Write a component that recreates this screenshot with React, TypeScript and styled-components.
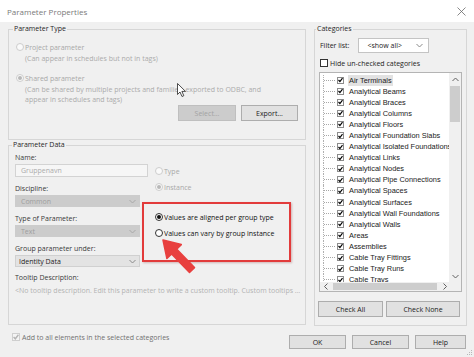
import React from 'react';
import styled, { createGlobalStyle } from 'styled-components';

const GlobalStyle = createGlobalStyle`
  html, body { margin: 0; padding: 0; background: #f0f0f0; }
  body { font-family: "Open Sans", "Noto Sans", "Liberation Sans", sans-serif; }
  * { box-sizing: border-box; }
`;

const Window = styled.div`
  position: relative;
  width: 474px;
  height: 357px;
  overflow: hidden;
  background: #f0f0f0;
  display: flex;
  flex-direction: column;
  font-size: 7px;
  color: #1f1f1f;
`;

const TitleBar = styled.div`
  flex: none;
  height: 22px;
  background: #ffffff;
  display: flex;
  align-items: center;
  justify-content: space-between;
  padding: 0 8px 0 7px;
  font-size: 8px;
  color: #7a7a7a;
`;

const Body = styled.div`
  display: grid;
  grid-template-columns: 298px 153px;
  column-gap: 8px;
  padding: 2px 0 0 8px;
`;

const Column = styled.div`
  display: flex;
  flex-direction: column;
`;

const Group = styled.fieldset<{ $h: number; $pad: string }>`
  margin: 0;
  min-width: 0;
  height: ${p => p.$h}px;
  border: 1px solid #d6d6d6;
  padding: ${p => p.$pad};
  display: flex;
  flex-direction: column;
`;

const Legend = styled.legend`
  padding: 0 1px;
  margin-left: -3px;
  line-height: 10px;
  color: #262626;
`;

// radio buttons
const RadioRow = styled.div<{ $enabled?: boolean; $mt?: number }>`
  height: 12px;
  display: flex;
  align-items: center;
  gap: 1px;
  margin-top: ${p => p.$mt ?? 0}px;
  color: ${p => (p.$enabled ? '#111111' : '#a8a8a8')};
`;

const Radio = styled.span<{ $checked?: boolean; $enabled?: boolean }>`
  flex: none;
  width: 8px;
  height: 8px;
  border-radius: 50%;
  border: 1px solid ${p => (p.$enabled ? '#333333' : '#cdcdcd')};
  background: ${p => (p.$enabled ? '#ffffff' : '#fafafa')};
  display: flex;
  align-items: center;
  justify-content: center;

  &::after {
    content: '';
    width: 4px;
    height: 4px;
    border-radius: 50%;
    background: ${p => (p.$enabled ? '#111111' : '#b8b8b8')};
    display: ${p => (p.$checked ? 'block' : 'none')};
  }
`;

const OptionBlock = styled.div<{ $mt: number }>`
  display: flex;
  flex-direction: column;
  gap: 1px;
  margin-top: ${p => p.$mt}px;
`;

const Hint = styled.div`
  padding-left: 9px;
  line-height: 10px;
  color: #ababab;
`;

const ButtonRow = styled.div<{ $justify: string; $gap: number; $ml?: number }>`
  display: flex;
  justify-content: ${p => p.$justify};
  gap: ${p => p.$gap}px;
  margin: auto 0 0 ${p => p.$ml ?? 0}px;
`;

const Button = styled.div<{ $w: number; $h?: number; $disabled?: boolean }>`
  width: ${p => p.$w}px;
  height: ${p => p.$h ?? 16}px;
  display: flex;
  align-items: center;
  justify-content: center;
  background: ${p => (p.$disabled ? '#cccccc' : '#e1e1e1')};
  border: 1px solid ${p => (p.$disabled ? '#bfbfbf' : '#adadad')};
  color: ${p => (p.$disabled ? '#a3a3a3' : '#222222')};
`;

// parameter data
const DataGrid = styled.div`
  display: grid;
  grid-template-columns: 127px 150px;
`;

const Fields = styled.div`
  display: flex;
  flex-direction: column;
  gap: 6px;
`;

const Field = styled.div`
  display: flex;
  flex-direction: column;
  gap: 1px;
`;

const FieldLabel = styled.div`
  line-height: 11px;
  color: #3a3a3a;
`;

const TextInput = styled.div`
  width: 133px;
  height: 13px;
  display: flex;
  align-items: center;
  padding-left: 5px;
  background: #f6f6f6;
  border: 1px solid #d3d3d3;
  color: #ababab;
`;

const Select = styled.div<{ $variant: 'disabled' | 'normal' | 'white'; $w: number; $h: number; $pl: number }>`
  width: ${p => p.$w}px;
  height: ${p => p.$h}px;
  display: flex;
  align-items: center;
  justify-content: space-between;
  padding: 0 ${p => (p.$variant === 'white' ? 5 : 3)}px 0 ${p => p.$pl}px;
  background: ${p => (p.$variant === 'disabled' ? '#cccccc' : p.$variant === 'normal' ? '#e3e3e3' : '#ffffff')};
  border: 1px solid ${p => (p.$variant === 'disabled' ? '#cccccc' : p.$variant === 'normal' ? '#d0d0d0' : '#c4c4c4')};
  color: ${p => (p.$variant === 'disabled' ? '#9e9e9e' : '#222222')};
`;

const Scope = styled.div`
  display: flex;
  flex-direction: column;
  padding: 13px 0 0 13px;
`;

const Highlight = styled.div`
  width: 149px;
  height: 60px;
  margin: 9px 0 0 -13px;
  padding: 7px 0 0 11px;
  border: 2px solid #e23b3b;
  box-shadow: 1px 1px 2px rgba(120, 0, 0, 0.25);
  display: flex;
  flex-direction: column;
  gap: 4px;
`;

const Tooltip = styled.div`
  display: flex;
  flex-direction: column;
  gap: 3px;
  margin-top: 5px;
`;

const TooltipText = styled.div`
  width: 286px;
  line-height: 10px;
  color: #b3b3b3;
  white-space: nowrap;
  overflow: hidden;
  text-overflow: ellipsis;
`;

// categories
const FilterRow = styled.div`
  height: 15px;
  display: flex;
  align-items: center;
  gap: 9px;
  padding-left: 1px;
  color: #222222;
`;

const CheckRow = styled.div<{ $mt: number; $pl?: number; $disabled?: boolean }>`
  height: 10px;
  display: flex;
  align-items: center;
  gap: 2px;
  margin-top: ${p => p.$mt}px;
  padding-left: ${p => p.$pl ?? 0}px;
  color: ${p => (p.$disabled ? '#707070' : '#222222')};
`;

const Box = styled.span<{ $tone?: 'plain' | 'disabled' | 'list' }>`
  flex: none;
  width: ${p => (p.$tone === 'list' ? 7 : 8)}px;
  height: ${p => (p.$tone === 'list' ? 7 : 8)}px;
  margin-left: ${p => (p.$tone === 'list' ? 2 : 0)}px;
  background: ${p => (p.$tone === 'disabled' ? '#f4f4f4' : '#ffffff')};
  border: 1px solid ${p => (p.$tone === 'disabled' ? '#cfcfcf' : p.$tone === 'list' ? '#8c8c8c' : '#333333')};
  display: flex;
  align-items: center;
  justify-content: center;
`;

const ListBox = styled.div`
  width: 143px;
  height: 220px;
  margin-top: 4px;
  border: 1px solid #b4b4b4;
  background: #ffffff;
  display: grid;
  grid-template-columns: 1fr 12px;
  grid-template-rows: 1fr 9px;
`;

const Tree = styled.div`
  overflow: hidden;
  padding-top: 1.5px;
  font-family: "Liberation Sans", Arial, sans-serif;
  font-size: 7.4px;
  color: #1a1a1a;
`;

const TreeRow = styled.div`
  height: 11.1px;
  display: flex;
  align-items: center;
  padding-left: 3px;
  white-space: nowrap;
`;

const Connector = styled.span`
  flex: none;
  width: 12px;
  align-self: stretch;
  border-left: 1px dotted #b0b0b0;
  background: repeating-linear-gradient(90deg, #a8a8a8 0 1px, transparent 1px 2px) left center / 100% 1px no-repeat;
`;

const ItemLabel = styled.span<{ $selected?: boolean }>`
  margin-left: 4px;
  padding: 1px 1px;
  background: ${p => (p.$selected ? '#e2e2e2' : 'transparent')};
`;

const VScroll = styled.div`
  display: flex;
  flex-direction: column;
  background: #f0f0f0;
`;

const HScroll = styled.div`
  display: flex;
  background: #f0f0f0;
`;

const ArrowButton = styled.div<{ $w?: number; $h?: number }>`
  flex: none;
  width: ${p => (p.$w ? `${p.$w}px` : 'auto')};
  height: ${p => (p.$h ? `${p.$h}px` : 'auto')};
  display: flex;
  align-items: center;
  justify-content: center;
`;

const VThumb = styled.div`
  height: 36px;
  margin: 0 1px;
  background: #cdcdcd;
`;

const HThumb = styled.div`
  width: 104px;
  margin: 1px 0 1px 2px;
  background: #cdcdcd;
`;

const Spacer = styled.div`
  flex: 1;
`;

const Corner = styled.div`
  background: #f0f0f0;
`;

const Footer = styled.div`
  flex: 1;
  display: flex;
  justify-content: space-between;
  align-items: flex-start;
  padding: 0 8px 0 12px;
`;

const FooterButtons = styled.div`
  display: flex;
  gap: 6px;
  margin-top: 9px;
`;

const Overlay = styled.svg<{ $x: number; $y: number }>`
  position: absolute;
  left: ${p => p.$x}px;
  top: ${p => p.$y}px;
  pointer-events: none;
`;

const Chevron = ({ dir = 'down', color = '#8a8a8a' }: { dir?: 'down' | 'up' | 'left' | 'right'; color?: string }) => {
  const pts = {
    down: '0.5,1 3.5,4 6.5,1',
    up: '0.5,4 3.5,1 6.5,4',
    left: '4.5,0.5 1.5,3.5 4.5,6.5',
    right: '2.5,0.5 5.5,3.5 2.5,6.5',
  }[dir];
  const vertical = dir === 'down' || dir === 'up';
  return (
    <svg width={vertical ? 7 : 6} height={vertical ? 5 : 7} viewBox={vertical ? '0 0 7 5' : '0 0 6 7'}>
      <polyline points={pts} fill="none" stroke={color} strokeWidth="1" />
    </svg>
  );
};

const Check = ({ color = '#000' }: { color?: string }) => (
  <svg width="6" height="6" viewBox="0 0 6 6">
    <polyline points="0.6,3 2.3,4.8 5.4,0.8" fill="none" stroke={color} strokeWidth="1.4" />
  </svg>
);

const categories = [
  'Air Terminals',
  'Analytical Beams',
  'Analytical Braces',
  'Analytical Columns',
  'Analytical Floors',
  'Analytical Foundation Slabs',
  'Analytical Isolated Foundations',
  'Analytical Links',
  'Analytical Nodes',
  'Analytical Pipe Connections',
  'Analytical Spaces',
  'Analytical Surfaces',
  'Analytical Wall Foundations',
  'Analytical Walls',
  'Areas',
  'Assemblies',
  'Cable Tray Fittings',
  'Cable Tray Runs',
  'Cable Trays',
];

const App: React.FC = () => {
  return (
    <>
      <GlobalStyle />
      <Window>
        <TitleBar>
          <span>Parameter Properties</span>
          <svg width="9" height="9" viewBox="0 0 9 9">
            <path d="M0.5 0.5 L8.5 8.5 M8.5 0.5 L0.5 8.5" stroke="#6a6a6a" strokeWidth="0.8" />
          </svg>
        </TitleBar>

        <Body>
          <Column>
            <Group $h={116} $pad="0 7px 8px 7px">
              <Legend>Parameter Type</Legend>
              <OptionBlock $mt={7}>
                <RadioRow>
                  <Radio />
                  Project parameter
                </RadioRow>
                <Hint>(Can appear in schedules but not in tags)</Hint>
              </OptionBlock>
              <OptionBlock $mt={8}>
                <RadioRow>
                  <Radio $checked />
                  Shared parameter
                </RadioRow>
                <Hint>
                  (Can be shared by multiple projects and families, exported to ODBC, and
                  <br />
                  appear in schedules and tags)
                </Hint>
              </OptionBlock>
              <ButtonRow $justify="flex-end" $gap={5}>
                <Button $w={58} $disabled>Select...</Button>
                <Button $w={57}>Export...</Button>
              </ButtonRow>
            </Group>

            <Group $h={185} $pad="2px 6px 0 6px">
              <Legend>Parameter Data</Legend>
              <DataGrid>
                <Fields>
                  <Field>
                    <FieldLabel>Name:</FieldLabel>
                    <TextInput>Gruppenavn</TextInput>
                  </Field>
                  <Field>
                    <FieldLabel>Discipline:</FieldLabel>
                    <Select $variant="disabled" $w={125} $h={12} $pl={5}>
                      Common
                      <Chevron color="#a8a8a8" />
                    </Select>
                  </Field>
                  <Field>
                    <FieldLabel>Type of Parameter:</FieldLabel>
                    <Select $variant="disabled" $w={125} $h={12} $pl={5}>
                      Text
                      <Chevron color="#a8a8a8" />
                    </Select>
                  </Field>
                  <Field>
                    <FieldLabel>Group parameter under:</FieldLabel>
                    <Select $variant="normal" $w={125} $h={12} $pl={3}>
                      Identity Data
                      <Chevron color="#8a8a8a" />
                    </Select>
                  </Field>
                </Fields>
                <Scope>
                  <RadioRow>
                    <Radio />
                    Type
                  </RadioRow>
                  <RadioRow $mt={4}>
                    <Radio $checked />
                    Instance
                  </RadioRow>
                  <Highlight>
                    <RadioRow $enabled>
                      <Radio $enabled $checked />
                      Values are aligned per group type
                    </RadioRow>
                    <RadioRow $enabled>
                      <Radio $enabled />
                      Values can vary by group instance
                    </RadioRow>
                  </Highlight>
                </Scope>
              </DataGrid>
              <Tooltip>
                <FieldLabel>Tooltip Description:</FieldLabel>
                <TooltipText>
                  &lt;No tooltip description. Edit this parameter to write a custom tooltip. Custom tooltips have a 250 character limit.&gt;
                </TooltipText>
              </Tooltip>
            </Group>
          </Column>

          <Group $h={302} $pad="4px 4px 8px 4px">
            <Legend>Categories</Legend>
            <FilterRow>
              Filter list:
              <Select $variant="white" $w={71} $h={15} $pl={8}>
                &lt;show all&gt;
                <Chevron color="#8a8a8a" />
              </Select>
            </FilterRow>
            <CheckRow $mt={5} $pl={1}>
              <Box />
              Hide un-checked categories
            </CheckRow>
            <ListBox>
              <Tree>
                {categories.map((name, i) => (
                  <TreeRow key={name}>
                    <Connector />
                    <Box $tone="list">
                      <Check />
                    </Box>
                    <ItemLabel $selected={i === 0}>{name}</ItemLabel>
                  </TreeRow>
                ))}
              </Tree>
              <VScroll>
                <ArrowButton $h={13}>
                  <Chevron dir="up" color="#606060" />
                </ArrowButton>
                <VThumb />
                <Spacer />
                <ArrowButton $h={12}>
                  <Chevron dir="down" color="#606060" />
                </ArrowButton>
              </VScroll>
              <HScroll>
                <ArrowButton $w={11}>
                  <Chevron dir="left" color="#606060" />
                </ArrowButton>
                <HThumb />
                <Spacer />
                <ArrowButton $w={11}>
                  <Chevron dir="right" color="#606060" />
                </ArrowButton>
              </HScroll>
              <Corner />
            </ListBox>
            <ButtonRow $justify="flex-start" $gap={3} $ml={-1}>
              <Button $w={65}>Check All</Button>
              <Button $w={74}>Check None</Button>
            </ButtonRow>
          </Group>
        </Body>

        <Footer>
          <CheckRow $mt={6} $disabled>
            <Box $tone="disabled">
              <Check color="#b5b5b5" />
            </Box>
            Add to all elements in the selected categories
          </CheckRow>
          <FooterButtons>
            <Button $w={57} $h={14}>OK</Button>
            <Button $w={57} $h={14}>Cancel</Button>
            <Button $w={51} $h={14}>Help</Button>
          </FooterButtons>
        </Footer>

        {/* mouse pointer */}
        <Overlay $x={177} $y={83} width="10" height="15" viewBox="0 0 10 15">
          <polygon points="0.5,0.5 0.5,11.5 3,9 5,13.5 6.8,12.7 4.9,8.4 8.5,8.4" fill="#ffffff" stroke="#222222" strokeWidth="0.8" strokeLinejoin="round" />
        </Overlay>

        {/* red annotation arrow */}
        <Overlay $x={150} $y={232} width="50" height="46" viewBox="0 0 50 46">
          <polygon
            points="13,8 31.3,12.6 26.6,17.1 44.5,35.6 39.5,40.4 21.6,21.9 16.9,26.5"
            fill="#e8403f"
            stroke="#e8403f"
            strokeWidth="1.5"
            strokeLinejoin="round"
          />
        </Overlay>

        {/* resize grip */}
        <Overlay $x={465} $y={348} width="8" height="8" viewBox="0 0 8 8">
          <g fill="#b8b8b8">
            <rect x="6" y="2" width="1" height="1" />
            <rect x="4" y="4" width="1" height="1" />
            <rect x="6" y="4" width="1" height="1" />
            <rect x="2" y="6" width="1" height="1" />
            <rect x="4" y="6" width="1" height="1" />
            <rect x="6" y="6" width="1" height="1" />
          </g>
        </Overlay>
      </Window>
    </>
  );
};

export default App;
